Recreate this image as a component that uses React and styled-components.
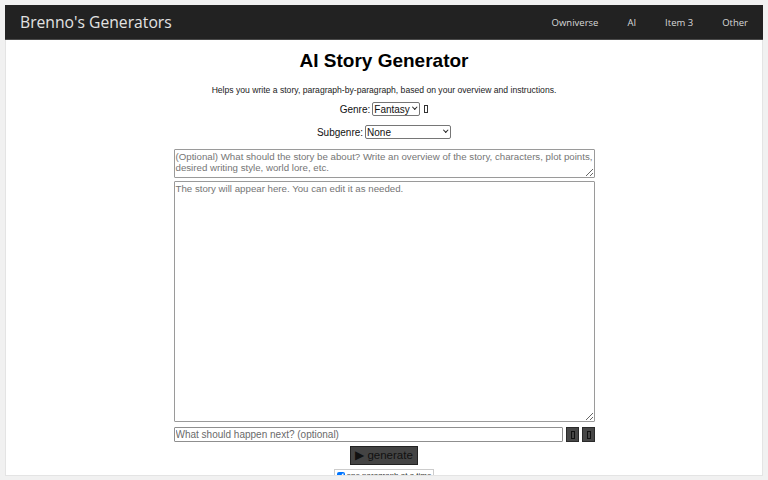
import React from "react";
import styled, { createGlobalStyle } from "styled-components";

const Global = createGlobalStyle`
  html, body {
    margin: 0;
    padding: 0;
    background: #f1f1f1;
    font-family: "Liberation Sans", Arial, sans-serif;
  }
`;

const Page = styled.div`
  height: 100vh;
  box-sizing: border-box;
  padding: 5px 5px 4px;
  display: flex;
  flex-direction: column;
`;

const NavBar = styled.nav`
  height: 34px;
  background: #222;
  border-bottom: 1px solid #4a4a4a;
  display: flex;
  align-items: center;
  padding: 0 15px 0 15px;
  font-family: "Open Sans", sans-serif;
  flex-shrink: 0;
`;

const Brand = styled.div`
  color: #e2e2e2;
  font-size: 15.7px;
  flex: 1;
`;

const NavLink = styled.a`
  color: #d8d8d8;
  font-size: 9.5px;
  margin-left: ${(p) => p.$gap}px;
  text-decoration: none;
`;

const Card = styled.main`
  flex: 1;
  background: #fff;
  border: 1px solid #e4e4e4;
  border-top: none;
  overflow: hidden;
  display: flex;
  flex-direction: column;
  align-items: center;
`;

const Title = styled.h1`
  font-size: 19px;
  font-weight: bold;
  margin: 10px 0 0;
  color: #000;
`;

const Lead = styled.p`
  font-size: 8.6px;
  color: #222;
  margin: 13px 0 0;
`;

const Row = styled.div`
  font-size: 10px;
  color: #111;
  margin-top: ${(p) => p.$top}px;
  display: flex;
  align-items: center;
  gap: 2px;
`;

const SelectWrap = styled.span`
  position: relative;
  display: inline-flex;
  &::after {
    content: "";
    position: absolute;
    right: 4px;
    top: 3px;
    width: 2.5px;
    height: 2.5px;
    border-right: 1.5px solid #222;
    border-bottom: 1.5px solid #222;
    transform: rotate(45deg);
    pointer-events: none;
  }
`;

const Select = styled.select`
  appearance: none;
  font-family: "Liberation Sans", Arial, sans-serif;
  font-size: 10px;
  height: 14px;
  width: ${(p) => p.$w}px;
  padding: 0 8px 0 1px;
  border: 1px solid #767676;
  border-radius: 2px;
  background: #fff;
  color: #111;
`;

const Tofu = styled.span`
  display: inline-block;
  width: 2px;
  height: 6px;
  border: 1px solid ${(p) => p.$color || "#333"};
  margin-left: 2px;
`;

const Form = styled.div`
  width: 421px;
  display: flex;
  flex-direction: column;
  align-items: center;
`;

const Area = styled.textarea`
  width: 100%;
  box-sizing: border-box;
  height: ${(p) => p.$h}px;
  margin-top: ${(p) => p.$top}px;
  font-family: "Liberation Sans", Arial, sans-serif;
  font-size: 9.7px;
  line-height: 11px;
  padding: 1px 0 1px 1px;
  border: 1px solid #9a9a9a;
  border-radius: 1px;
  resize: vertical;
  &::placeholder {
    color: #757575;
  }
`;

const NextRow = styled.div`
  width: 100%;
  display: flex;
  gap: 3px;
  margin-top: 5px;
`;

const NextInput = styled.input`
  flex: 1;
  height: 15px;
  box-sizing: border-box;
  font-family: "Liberation Sans", Arial, sans-serif;
  font-size: 10px;
  padding: 0 1px;
  border: 1px solid #8f8f8f;
  border-radius: 1px;
  &::placeholder {
    color: #6a6a6a;
  }
`;

const IconButton = styled.button`
  width: 13px;
  height: 15px;
  padding: 0;
  background: #474747;
  border: 1px solid #2a2a2a;
  display: flex;
  align-items: center;
  justify-content: center;
`;

const Generate = styled.button`
  margin-top: 4px;
  height: 19px;
  padding: 0 4px;
  background: #444;
  border: 1px solid #222;
  color: #111;
  font-family: "Liberation Sans", Arial, sans-serif;
  font-size: 11.5px;
  line-height: 17px;
`;

const CheckLabel = styled.label`
  margin-top: 4px;
  border: 1px solid #ccc;
  padding: 1px 2px;
  font-size: 8px;
  color: #333;
  display: flex;
  align-items: center;
  gap: 2px;
  input {
    margin: 0;
    width: 8px;
    height: 8px;
  }
`;

export default function App() {
  return (
    <>
      <Global />
      <Page>
        <NavBar>
          <Brand>Brenno's Generators</Brand>
          <NavLink $gap={0}>Owniverse</NavLink>
          <NavLink $gap={29}>AI</NavLink>
          <NavLink $gap={29}>Item 3</NavLink>
          <NavLink $gap={29}>Other</NavLink>
        </NavBar>
        <Card>
          <Title>AI Story Generator</Title>
          <Lead>
            Helps you write a story, paragraph-by-paragraph, based on your overview and instructions.
          </Lead>
          <Row $top={7}>
            Genre:
            <SelectWrap>
              <Select $w={48} defaultValue="Fantasy">
                <option>Fantasy</option>
              </Select>
            </SelectWrap>
            <Tofu />
          </Row>
          <Row $top={9}>
            Subgenre:
            <SelectWrap>
              <Select $w={86} defaultValue="None">
                <option>None</option>
              </Select>
            </SelectWrap>
          </Row>
          <Form>
            <Area
              $h={29}
              $top={10}
              placeholder="(Optional) What should the story be about? Write an overview of the story, characters, plot points, desired writing style, world lore, etc."
            />
            <Area
              $h={241}
              $top={3}
              placeholder="The story will appear here. You can edit it as needed."
            />
            <NextRow>
              <NextInput placeholder="What should happen next? (optional)" />
              <IconButton>
                <Tofu $color="#111" />
              </IconButton>
              <IconButton>
                <Tofu $color="#111" />
              </IconButton>
            </NextRow>
            <Generate>▶ generate</Generate>
            <CheckLabel>
              <input type="checkbox" defaultChecked />
              one paragraph at a time
            </CheckLabel>
          </Form>
        </Card>
      </Page>
    </>
  );
}
